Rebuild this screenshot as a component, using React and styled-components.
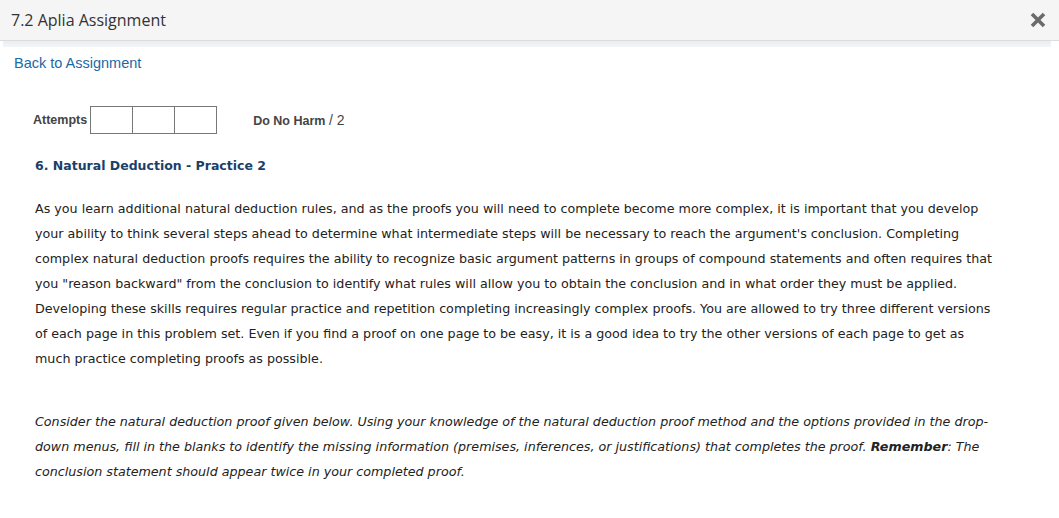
import React from "react";
import styled, { createGlobalStyle } from "styled-components";

const Global = createGlobalStyle`
  body {
    margin: 0;
    background: #fff;
    font-family: "DejaVu Sans", Verdana, sans-serif;
  }
`;

const Header = styled.div`
  display: flex;
  align-items: center;
  justify-content: space-between;
  height: 40px;
  padding: 0 13px 0 11px;
  background: #f5f5f5;
  border-bottom: 1px solid #dcdcdc;
`;

const Title = styled.h1`
  margin: 0;
  font-family: "Open Sans", sans-serif;
  font-size: 16px;
  font-weight: 400;
  color: #333;
`;

const Close = styled.button`
  border: 0;
  background: none;
  padding: 0;
  display: flex;
  cursor: pointer;
`;

const Band = styled.div`
  height: 6px;
  margin: 0 8px 0 3px;
  background: linear-gradient(#e8eef1, #f3f6f7);
`;

const Body = styled.div`
  padding: 0 14px;
`;

const BackLink = styled.a`
  display: block;
  margin-top: 8px;
  font-family: "Liberation Sans", Arial, sans-serif;
  font-size: 14.5px;
  color: #1a6aa5;
  text-decoration: none;
`;

const Content = styled.div`
  padding: 0 10px 0 21px;
`;

const AttemptRow = styled.div`
  display: flex;
  align-items: center;
  margin-top: 35px;
  font-family: "Liberation Sans", Arial, sans-serif;
  font-size: 12.5px;
  color: #444;
`;

const Label = styled.span`
  font-weight: 700;
  margin-left: -2px;
  margin-right: 3px;
`;

const Boxes = styled.div`
  display: flex;
`;

const Box = styled.div`
  width: 41px;
  height: 26px;
  border: 1px solid #777;
  margin-left: ${(p) => (p.first ? "0" : "-1px")};
`;

const Score = styled.span`
  margin-left: 36px;
  font-weight: 700;
  b {
    font-weight: 400;
    font-size: 14px;
  }
`;

const Heading = styled.h2`
  margin: 24px 0 0;
  font-size: 12.5px;
  font-weight: 700;
  color: #1b3f6b;
`;

const Para = styled.p`
  margin: ${(p) => p.mt}px 0 0;
  font-size: 12.7px;
  line-height: 25px;
  color: #222;
  white-space: nowrap;
  font-style: ${(p) => (p.italic ? "italic" : "normal")};
`;

const intro = [
  "As you learn additional natural deduction rules, and as the proofs you will need to complete become more complex, it is important that you develop",
  "your ability to think several steps ahead to determine what intermediate steps will be necessary to reach the argument's conclusion. Completing",
  "complex natural deduction proofs requires the ability to recognize basic argument patterns in groups of compound statements and often requires that",
  'you "reason backward" from the conclusion to identify what rules will allow you to obtain the conclusion and in what order they must be applied.',
  "Developing these skills requires regular practice and repetition completing increasingly complex proofs. You are allowed to try three different versions",
  "of each page in this problem set. Even if you find a proof on one page to be easy, it is a good idea to try the other versions of each page to get as",
  "much practice completing proofs as possible.",
];

export default function App() {
  return (
    <>
      <Global />
      <Header>
        <Title>7.2 Aplia Assignment</Title>
        <Close aria-label="close">
          <svg width="16" height="16" viewBox="0 0 16 16">
            <path d="M2 2 L14 14 M14 2 L2 14" stroke="#6b6b6b" strokeWidth="3.6" />
          </svg>
        </Close>
      </Header>
      <Band />
      <Body>
        <BackLink href="#">Back to Assignment</BackLink>
        <Content>
          <AttemptRow>
            <Label>Attempts</Label>
            <Boxes>
              <Box first />
              <Box />
              <Box />
            </Boxes>
            <Score>
              Do No Harm <b>/ 2</b>
            </Score>
          </AttemptRow>
          <Heading>6. Natural Deduction - Practice 2</Heading>
          <Para mt={23}>
            {intro.map((line, i) => (
              <React.Fragment key={i}>
                {line}
                {i < intro.length - 1 && <br />}
              </React.Fragment>
            ))}
          </Para>
          <Para mt={38} italic>
            Consider the natural deduction proof given below. Using your knowledge of the natural deduction proof method
            and the options provided in the drop-
            <br />
            down menus, fill in the blanks to identify the missing information (premises, inferences, or justifications)
            that completes the proof. <strong>Remember</strong>: The
            <br />
            conclusion statement should appear twice in your completed proof.
          </Para>
        </Content>
      </Body>
    </>
  );
}
